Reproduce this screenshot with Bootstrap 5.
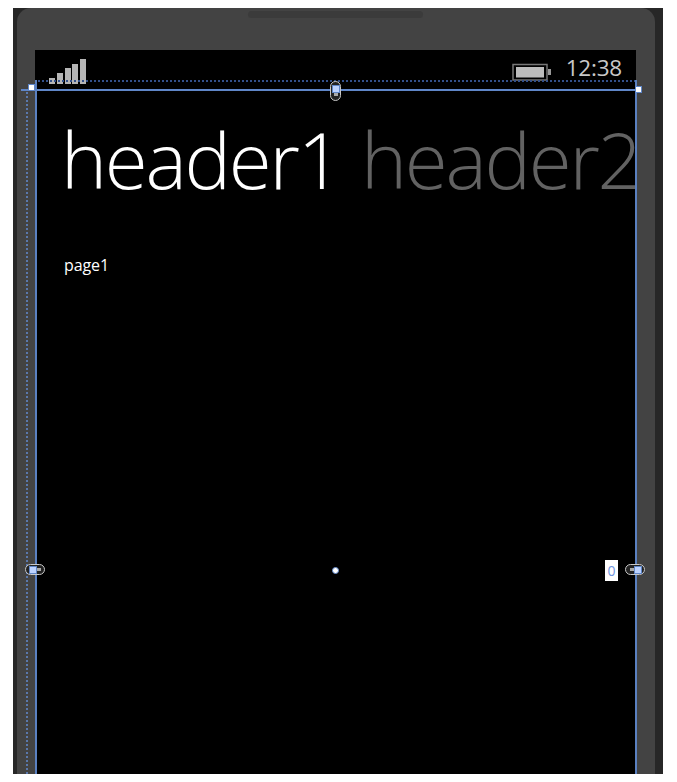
<!DOCTYPE html>
<html lang="en">
<head>
<meta charset="utf-8">
<title>Pivot designer</title>
<link href="https://cdn.jsdelivr.net/npm/bootstrap@5.3.0/dist/css/bootstrap.min.css" rel="stylesheet">
<style>
html,body{height:100%;background:#fff;overflow:hidden}
body{padding:8px 14px 8px 13px}
.phone-frame{position:relative;height:766px;background:#272727;padding:42px 27px 0 22px;overflow:hidden}
.phone-frame::before{content:"";position:absolute;left:4px;right:8px;top:0;bottom:0;background:#434343;border-radius:14px 14px 0 0}
.speaker{position:absolute;left:235px;top:3px;width:175px;height:7px;border-radius:4px;background:#3b3b3b}
.screen{position:relative;height:100%;background:#000;color:#fff;overflow:hidden}
.status-strip{height:39px;padding:0 14px 0 14px;color:#c8c8c8}
.clock{font-family:"Open Sans",sans-serif;font-weight:400;font-size:22.5px;line-height:1;padding-top:7px;letter-spacing:-.2px;margin-left:6px}
.bars{height:25px;margin-top:9px;gap:1.75px}
.bars i{display:block;width:6px;background:#b5b5b5}
.batt{margin-top:7px;margin-right:8px}
.head-row{margin-top:24px;padding-left:26px;white-space:nowrap;font-family:"Open Sans",sans-serif;font-weight:300;font-size:78px;line-height:92px;letter-spacing:-2.2px}
.head-off{color:#626262;margin-left:21px}
.page-label{margin:50px 0 0 29px;font-family:"Open Sans",sans-serif;font-size:16px;line-height:20px;letter-spacing:-.1px}
.adorn{position:absolute}
.line-h{left:22px;top:81px;width:604px;height:1.5px;background:#5f86c8}
.line-l{left:22px;top:72px;bottom:0;width:1.5px;background:#5a80c0}
.line-r{left:622px;top:72px;bottom:0;width:1.5px;background:#5a80c0}
.dot-h{left:22px;top:72px;width:601px;border-top:2px dotted #33508a}
.dot-v{left:13px;top:81px;bottom:0;border-left:2px dotted #5a78ad}
.tick{left:8px;top:81px;width:14px;height:1.5px;background:#5f86c8}
.handle{width:7px;height:7px;background:#fff;border:1px solid #5f86c8}
.pill{display:flex;align-items:center;justify-content:center;border:1.5px solid #c8c8c8;background:#222;border-radius:6px}
.pill-v{left:317px;top:73px;width:11px;height:20px;flex-direction:column;gap:1px}
.pill-h{width:20px;height:11px;gap:1px}
.pill-a{left:12px;top:556px}
.pill-b{left:612px;top:556px;flex-direction:row-reverse}
.core{display:block;width:6px;height:6px;background:#bcd2ff;box-shadow:0 0 0 1px #5f86c8}
.nub{display:block;width:4px;height:3px;background:#aaa}
.center-dot{left:319px;top:559px;width:7px;height:7px;border-radius:50%;background:#fff;border:1px solid #5f86c8}
.zero-tag{left:592px;top:552px;width:13px;height:21px;background:#fff;color:#6f94e0;font-family:"Open Sans",sans-serif;font-size:14px;line-height:21px;text-align:center}
</style>
</head>
<body>
<div class="phone-frame">
  <div class="speaker adorn"></div>
  <div class="screen d-flex flex-column">
    <div class="status-strip d-flex justify-content-between flex-shrink-0">
      <div class="bars d-flex align-items-end">
        <i style="height:6px"></i><i style="height:11px"></i><i style="height:16px"></i><i style="height:20px"></i><i style="height:25px"></i>
      </div>
      <div class="d-flex align-items-start">
        <svg width="40" height="24" viewBox="0 0 40 24" class="batt" aria-hidden="true"><rect x="1" y="7.5" width="34" height="15.5" fill="none" stroke="#777" stroke-width="1.5"/><rect x="4" y="10" width="28" height="10.5" fill="#bdbdbd"/><rect x="36" y="12" width="3" height="6" fill="#999"/></svg>
        <span class="clock">12:38</span>
      </div>
    </div>
    <div class="head-row"><span>header1</span><span class="head-off">header2</span></div>
    <div class="page-label">page1</div>
  </div>
  <div class="adorn dot-h"></div>
  <div class="adorn dot-v"></div>
  <div class="adorn tick"></div>
  <div class="adorn line-h"></div>
  <div class="adorn line-l"></div>
  <div class="adorn line-r"></div>
  <div class="adorn handle" style="left:15px;top:76px"></div>
  <div class="adorn handle" style="left:622px;top:78px"></div>
  <div class="adorn pill pill-v"><span class="core"></span><span class="nub"></span></div>
  <div class="adorn pill pill-h pill-a"><span class="core"></span><span class="nub"></span></div>
  <div class="adorn pill pill-h pill-b"><span class="core"></span><span class="nub"></span></div>
  <div class="adorn center-dot"></div>
  <div class="adorn zero-tag">0</div>
</div>
<script src="https://cdn.jsdelivr.net/npm/bootstrap@5.3.0/dist/js/bootstrap.bundle.min.js"></script>
</body>
</html>
